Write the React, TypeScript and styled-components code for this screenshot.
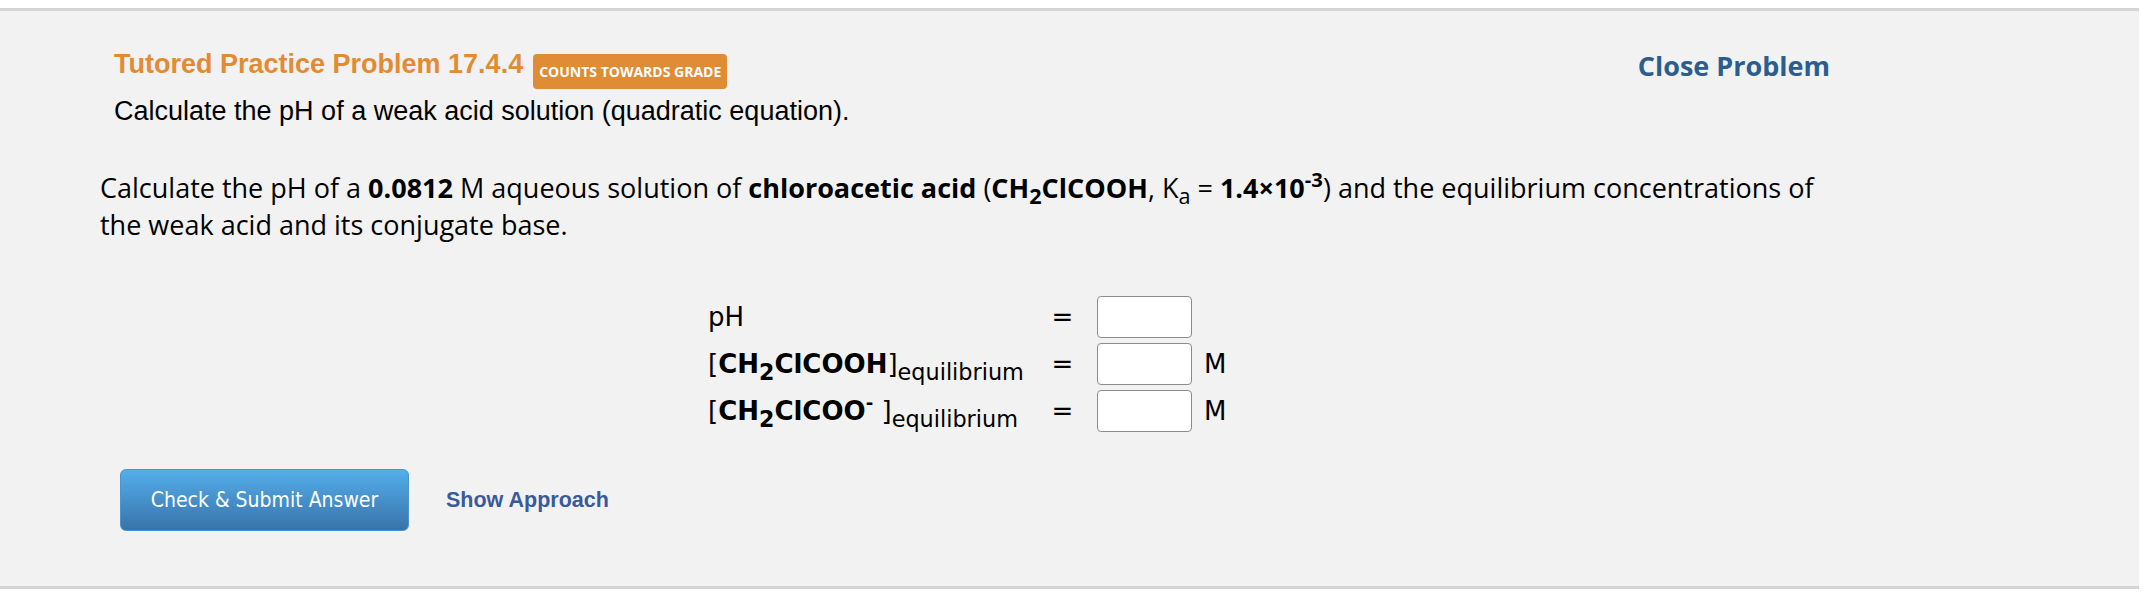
import React from "react";
import styled, { createGlobalStyle } from "styled-components";

const GlobalStyle = createGlobalStyle`
  html, body {
    margin: 0;
    padding: 0;
    background: #ffffff;
  }
  body {
    font-family: "Open Sans", "Liberation Sans", sans-serif;
    color: #000;
  }
`;

const Panel = styled.section`
  box-sizing: border-box;
  margin-top: 8px;
  width: 2139px;
  background: #f2f2f2;
  border-top: 3px solid #d4d4d4;
  border-bottom: 3px solid #d4d4d4;
  padding: 38px 309px 55px 100px;
`;

const Header = styled.header`
  margin-left: 14px;
  display: flex;
  flex-direction: column;
`;

const HeaderRow = styled.div`
  display: flex;
  align-items: flex-start;
  justify-content: space-between;
`;

const TitleGroup = styled.div`
  display: flex;
  align-items: flex-start;
  gap: 10px;
`;

const Title = styled.h1`
  margin: 0;
  font-family: "Liberation Sans", Arial, sans-serif;
  font-weight: 700;
  font-size: 27px;
  line-height: 31px;
  color: #e38b32;
`;

const Badge = styled.span`
  margin-top: 5px;
  height: 35px;
  box-sizing: border-box;
  display: inline-flex;
  align-items: center;
  padding: 0 6px;
  border-radius: 4px;
  background: #e08c34;
  color: #ffffff;
  font-family: "Open Sans", sans-serif;
  font-weight: 700;
  font-size: 14px;
  line-height: 20px;
  white-space: nowrap;
`;

const CloseLink = styled.a`
  margin-top: -2px;
  font-family: "Open Sans", sans-serif;
  font-weight: 700;
  font-size: 27px;
  line-height: 37px;
  color: #2b5d90;
  text-decoration: none;
  cursor: pointer;
`;

const Subtitle = styled.p`
  margin: 7px 0 0 0;
  font-family: "Liberation Sans", Arial, sans-serif;
  font-size: 27px;
  line-height: 31px;
  color: #000;
`;

const Question = styled.p`
  margin: 42px 0 0 0;
  font-family: "Open Sans", sans-serif;
  font-size: 27px;
  line-height: 37px;
  color: #000;
`;

const Phrase = styled.span`
  font-weight: 400;
`;

const Sub = styled.sub`
  font-size: 0.8em;
  line-height: 0;
  vertical-align: -0.28em;
`;

const Sup = styled.sup`
  font-size: 0.75em;
  line-height: 0;
  vertical-align: 0.55em;
`;

const AnswerGrid = styled.div`
  margin: 53px 0 0 608px;
  display: grid;
  grid-template-columns: 332px 45px 12px 95px 12px auto;
  grid-auto-rows: 42px;
  row-gap: 5px;
  align-items: center;
  font-family: "DejaVu Sans", Verdana, sans-serif;
  font-size: 26px;
  color: #000;
`;

const Label = styled.div`
  line-height: 31px;
  white-space: nowrap;
`;

const Bracket = styled.span`
  font-weight: 400;
`;

const Formula = styled.b`
  font-weight: 700;
`;

const LabelSub = styled.span`
  font-size: 0.86em;
  line-height: 0;
  vertical-align: -0.3em;
`;

const FormulaSub = styled.span`
  font-size: 0.85em;
  line-height: 0;
  vertical-align: -0.3em;
`;

const Charge = styled.span`
  font-size: 0.7em;
  line-height: 0;
  vertical-align: 0.6em;
`;

const Equals = styled.div`
  text-align: center;
  line-height: 31px;
`;

const AnswerInput = styled.input`
  grid-column: 4;
  box-sizing: border-box;
  width: 95px;
  height: 42px;
  margin: 0;
  border: 1px solid #8c8c8c;
  border-radius: 4px;
  background: #ffffff;
  font-size: 20px;
`;

const Unit = styled.div`
  grid-column: 6;
  line-height: 31px;
`;

const Footer = styled.div`
  margin: 37px 0 0 20px;
  display: flex;
  align-items: center;
  gap: 37px;
`;

const SubmitButton = styled.button`
  box-sizing: border-box;
  width: 289px;
  height: 62px;
  border: 1px solid #4a95cf;
  border-radius: 6px;
  background: linear-gradient(to bottom, #53afe9 0%, #4690cb 50%, #3873a8 100%);
  color: #ffffff;
  font-family: "DejaVu Sans Condensed", "DejaVu Sans", sans-serif;
  font-stretch: condensed;
  font-size: 21px;
  padding: 0;
  cursor: pointer;
`;

const ApproachLink = styled.a`
  font-family: "Liberation Sans", Arial, sans-serif;
  font-weight: 700;
  font-size: 21.5px;
  color: #3a5a9b;
  text-decoration: none;
  cursor: pointer;
`;

type Row = { key: string; label: React.ReactNode; unit?: string };

const rows: Row[] = [
  { key: "ph", label: <>pH</> },
  {
    key: "acid",
    label: (
      <>
        <Bracket>[</Bracket>
        <Formula>
          CH<FormulaSub>2</FormulaSub>ClCOOH
        </Formula>
        <Bracket>]</Bracket>
        <LabelSub>equilibrium</LabelSub>
      </>
    ),
    unit: "M",
  },
  {
    key: "base",
    label: (
      <>
        <Bracket>[</Bracket>
        <Formula>
          CH<FormulaSub>2</FormulaSub>ClCOO<Charge>-</Charge>
        </Formula>
        <Bracket> ]</Bracket>
        <LabelSub>equilibrium</LabelSub>
      </>
    ),
    unit: "M",
  },
];

export default function App() {
  return (
    <>
      <GlobalStyle />
      <Panel>
        <Header>
          <HeaderRow>
            <TitleGroup>
              <Title>Tutored Practice Problem 17.4.4</Title>
              <Badge>COUNTS TOWARDS GRADE</Badge>
            </TitleGroup>
            <CloseLink>Close Problem</CloseLink>
          </HeaderRow>
          <Subtitle>Calculate the pH of a weak acid solution (quadratic equation).</Subtitle>
        </Header>

        <Question>
          Calculate the pH of a <b>0.0812</b> M aqueous solution of <b>chloroacetic acid</b> (
          <b>
            CH<Sub>2</Sub>ClCOOH
          </b>
          , K<Sub>a</Sub> = <b>1.4×10<Sup>-3</Sup></b>)<Phrase> and the equilibrium concentrations of</Phrase>{" "}
          <Phrase>the weak acid and its conjugate base.</Phrase>
        </Question>

        <AnswerGrid>
          {rows.map((r) => (
            <React.Fragment key={r.key}>
              <Label>{r.label}</Label>
              <Equals>=</Equals>
              <AnswerInput type="text" aria-label={r.key} />
              {r.unit ? <Unit>{r.unit}</Unit> : <Unit />}
            </React.Fragment>
          ))}
        </AnswerGrid>

        <Footer>
          <SubmitButton>Check &amp; Submit Answer</SubmitButton>
          <ApproachLink>Show Approach</ApproachLink>
        </Footer>
      </Panel>
    </>
  );
}
